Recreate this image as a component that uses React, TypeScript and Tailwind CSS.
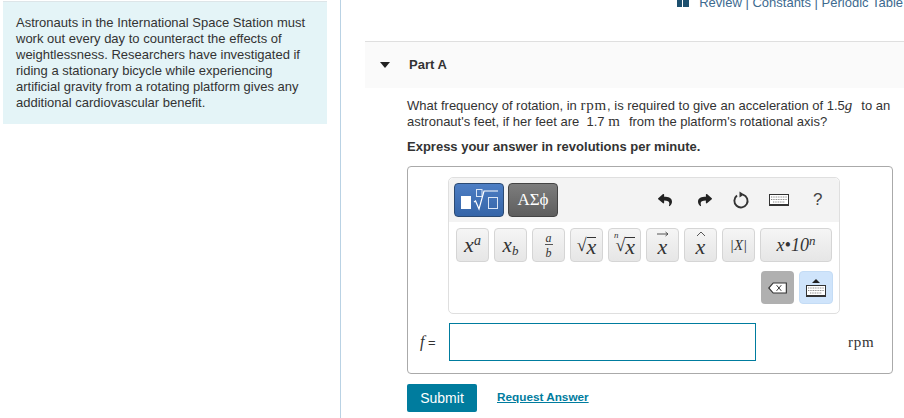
import React from 'react';
import { FaReply, FaShare } from 'react-icons/fa';

const serif = "font-['Liberation_Serif',serif]";

function KeyboardIcon({ className }: { className?: string }) {
  return (
    <svg viewBox="0 0 20 12" className={className}>
      <rect x="0.5" y="0.5" width="19" height="11" fill="#fff" stroke="#333" />
      <path d="M2 3h16M2 5.5h16" stroke="#888" strokeWidth="1.2" strokeDasharray="1 0.7" />
      <path d="M4 8h12" stroke="#888" strokeWidth="1.2" strokeDasharray="1 0.7" />
      <rect x="1" y="10" width="18" height="1.5" fill="#333" />
    </svg>
  );
}

function MathKey({ children, wide }: { children: React.ReactNode; wide?: boolean }) {
  return (
    <div
      className={`${wide ? 'w-[72px]' : 'w-[33px]'} h-[34px] shrink-0 flex items-center justify-center rounded-[4px] border border-[#d5d5d5] bg-gradient-to-b from-[#f5f5f5] to-[#e6e6e6] text-[#333] ${serif} italic`}
    >
      {children}
    </div>
  );
}

function Toolbar() {
  return (
    <div className="w-[392px] h-[137px] ml-[40px] mt-[10px] rounded-[5px] border border-[#dfdfdf] bg-white flex flex-col">
      <div className="h-[44px] bg-[#f3f3f3] rounded-t-[5px] flex items-center pl-[5px]">
        <div className="w-[50px] h-[34px] mt-[-1px] rounded-[4px] border border-[#2b4a73] bg-gradient-to-b from-[#4d7ec4] to-[#3565a8] flex items-center justify-center">
          <svg viewBox="0 0 46 28" className="w-[46px] h-[28px]">
            <rect x="5" y="10" width="10" height="13" fill="#fff" />
            <rect x="20.5" y="3.5" width="5.5" height="7" fill="none" stroke="#dbe6f5" strokeWidth="1" />
            <path d="M18 16l1.5-1 3.5 8 5-18h14" fill="none" stroke="#fff" strokeWidth="1.2" />
            <rect x="32.5" y="11.5" width="9" height="11" fill="none" stroke="#dbe6f5" strokeWidth="1" />
          </svg>
        </div>
        <div className={`w-[50px] h-[34px] mt-[-1px] ml-[4px] rounded-[4px] border border-[#444] bg-gradient-to-b from-[#7d7d7d] to-[#5e5e5e] flex items-center justify-center text-white text-[17px] ${serif}`}>
          ΑΣϕ
        </div>
        <FaReply className="ml-[100px] w-[14px] h-[14px] text-[#222]" />
        <FaShare className="ml-[26px] w-[14px] h-[14px] text-[#222]" />
        <svg viewBox="0 0 18 18" className="ml-[20px] w-[18px] h-[18px]" fill="none">
          <path d="M11 3.6A6.6 6.6 0 1 1 5 4.6" stroke="#333" strokeWidth="1.9" />
          <path d="M7.5 0.5l4.6 3-4.6 3z" fill="#333" />
        </svg>
        <KeyboardIcon className="ml-[19px] w-[20px] h-[12px]" />
        <span className="ml-[24px] text-[17px] text-[#444] font-['Liberation_Sans',sans-serif]">?</span>
      </div>
      <div className="flex gap-[5px] pl-[7px] pt-[6px]">
        <MathKey><span className="text-[22px]">x<sup className="text-[14px] -top-[7px]">a</sup></span></MathKey>
        <MathKey><span className="text-[21px]">x<sub className="text-[13px] -bottom-[3px]">b</sub></span></MathKey>
        <MathKey>
          <span className="flex flex-col items-center text-[12px] leading-[12px]">
            <span className="border-b border-[#555] px-[1px]">a</span>
            <span className="pt-[2px]">b</span>
          </span>
        </MathKey>
        <MathKey>
          <span className="flex items-end text-[22px] leading-[20px]">
            <span className="not-italic text-[18px]">√</span>
            <span className="border-t border-[#333] leading-[17px]">x</span>
          </span>
        </MathKey>
        <MathKey>
          <span className="flex items-end text-[22px] leading-[20px]">
            <sup className="text-[9px] leading-[9px] self-start -mr-[3px]">n</sup>
            <span className="not-italic text-[18px]">√</span>
            <span className="border-t border-[#333] leading-[17px]">x</span>
          </span>
        </MathKey>
        <MathKey>
          <span className="flex flex-col items-center mb-[4px]">
            <svg viewBox="0 0 12 6" className="w-[12px] h-[6px] mb-[1px]" fill="none">
              <path d="M0 3h11M8.5 1l2.5 2-2.5 2" stroke="#444" strokeWidth="0.9" />
            </svg>
            <span className="text-[22px] leading-[17px]">x</span>
          </span>
        </MathKey>
        <MathKey>
          <span className="flex flex-col items-center mb-[4px]">
            <svg viewBox="0 0 10 6" className="w-[10px] h-[6px] mb-[1px]" fill="none">
              <path d="M1 5l4-4 4 4" stroke="#444" strokeWidth="0.9" />
            </svg>
            <span className="text-[22px] leading-[17px]">x</span>
          </span>
        </MathKey>
        <MathKey><span className="text-[15px]">|X|</span></MathKey>
        <MathKey wide><span className="text-[18px]">x•10<sup className="text-[13px] -top-[6px]">n</sup></span></MathKey>
      </div>
      <div className="flex justify-end gap-[5px] pr-[6px] pt-[9px]">
        <div className="w-[33px] h-[33px] rounded-[4px] bg-[#b0b0b0] flex items-center justify-center">
          <svg viewBox="0 0 20 12" className="w-[19px] h-[12px]">
            <path d="M5.5 0.7H19.3V11.3H5.5L0.8 6z" fill="#fff" stroke="#333" strokeWidth="1.2" />
            <path d="M9 3l5 6M14 3l-5 6" stroke="#333" strokeWidth="1" />
          </svg>
        </div>
        <div className="w-[34px] h-[33px] rounded-[4px] border border-[#c4dcf5] bg-[#cfe4fb] flex flex-col items-center justify-center gap-[2px]">
          <svg viewBox="0 0 8 4" className="w-[8px] h-[4px]"><path d="M0 4l4-4 4 4z" fill="#222" /></svg>
          <KeyboardIcon className="w-[20px] h-[12px]" />
        </div>
      </div>
    </div>
  );
}

export default function App() {
  return (
    <div className="w-[904px] h-[418px] overflow-hidden bg-white flex font-['Liberation_Sans',sans-serif] text-[13px] leading-[16px] text-[#333]">
      {/* Intro panel */}
      <aside className="w-[341px] h-full shrink-0 border-r border-[#b9d2e4] pl-[3px] pr-[13px] pt-[1px]">
        <div className="h-[123px] bg-[#e4f4f7] border-t border-[#dde5e8] pl-[13px] pr-[18px] pt-[13px]">
          Astronauts in the International Space Station must work out every day to counteract the effects of weightlessness. Researchers have investigated if riding a stationary bicycle while experiencing artificial gravity from a rotating platform gives any additional cardiovascular benefit.
        </div>
      </aside>

      <main className="flex-1 min-w-0 pl-[24px]">
        {/* Top links */}
        <div className="h-[41px] flex justify-end items-start pr-[1px]">
          <div className="flex items-center mt-[-5px]">
            <span className="w-[12px] h-[8px] mt-[-1px] mr-[10px] bg-[#1c4f6e] relative">
              <span className="absolute left-[5px] top-0 w-[1px] h-full bg-white" />
            </span>
            <span className="text-[#3d6a8f] whitespace-nowrap">Review | Constants | Periodic Table</span>
          </div>
        </div>

        {/* Part header */}
        <div className="h-[47px] bg-[#fafafa] border-t border-[#dfdfdf] flex items-center pl-[15px]">
          <svg viewBox="0 0 10 6" className="w-[10px] h-[6px]"><path d="M0 0h10L5 6z" fill="#222" /></svg>
          <span className="ml-[19px] font-bold">Part A</span>
        </div>

        <div className="pl-[42px] pr-[11px]">
          <p className="pt-[10px] whitespace-nowrap">
            What frequency of rotation, in <span className={`${serif} text-[15px] tracking-[0.8px] leading-none`}>rpm</span>, is required to give an acceleration of 1.5<span className={`${serif} italic text-[15px] tracking-[0.8px] leading-none`}>g</span>&nbsp; <span className="ml-[1px]">to an</span>
            <br />
            astronaut's feet, if her feet are &nbsp;1.7 <span className={`${serif} text-[15px] tracking-[0.8px] leading-none`}>m</span>&nbsp; <span className="ml-[1px]">from the platform's rotational axis?</span>
          </p>
          <p className="mt-[9px] font-bold">Express your answer in revolutions per minute.</p>

          {/* Answer box */}
          <div className="mt-[11px] w-[486px] h-[208px] rounded-[4px] border border-[#aaa]">
            <Toolbar />
            <div className="flex items-center mt-[9px]">
              <span className="w-[41px] pl-[12px] whitespace-nowrap"><span className={`${serif} italic text-[16px] leading-none`}>f</span> =</span>
              <div className="w-[307px] h-[38px] border border-[#007c9e] bg-white" />
              <span className={`ml-[92px] ${serif} text-[15px] tracking-[0.8px]`}>rpm</span>
            </div>
          </div>

          <div className="mt-[10px] flex items-center">
            <button className="w-[70px] h-[28px] rounded-[2px] bg-[#007c9e] text-white text-[14px]">Submit</button>
            <a className="ml-[20px] mt-[-2px] font-bold text-[11.75px] text-[#007c9e] underline">Request Answer</a>
          </div>
        </div>
      </main>
    </div>
  );
}
